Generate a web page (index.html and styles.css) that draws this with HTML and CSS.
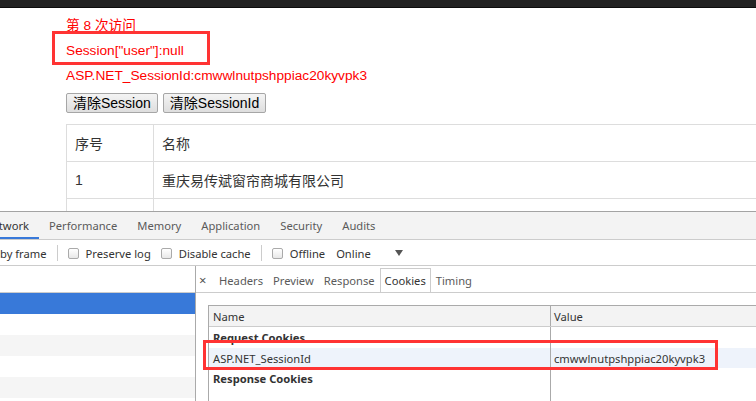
FILE: index.html
```html
<!DOCTYPE html>
<html>
<head>
<meta charset="utf-8">
<link rel="stylesheet" href="styles.css">
</head>
<body>
<div class="screen">
  <div class="topbar"></div>
  <div class="page">
    <div class="line">第 8 次访问</div>
    <div class="line">Session["user"]:null</div>
    <div class="line">ASP.NET_SessionId:cmwwlnutpshppiac20kyvpk3</div>
    <div class="buttons">
      <button class="btn">清除Session</button>
      <button class="btn">清除SessionId</button>
    </div>
    <table class="grid">
      <tr><td class="c1">序号</td><td>名称</td></tr>
      <tr><td class="c1">1</td><td>重庆易传斌窗帘商城有限公司</td></tr>
      <tr><td class="c1">2</td><td>重庆易传斌窗帘商城有限公司重庆易传斌窗帘商城有限公司</td></tr>
    </table>
    <div class="mark mark-session"></div>
  </div>
  <div class="devtools">
    <div class="tabbar">
      <span class="tab tab-active">Network</span>
      <span class="tab">Performance</span>
      <span class="tab">Memory</span>
      <span class="tab">Application</span>
      <span class="tab">Security</span>
      <span class="tab">Audits</span>
    </div>
    <div class="toolbar">
      <span class="tb-text">by frame</span>
      <span class="sep"></span>
      <span class="cb"></span><span class="tb-text">Preserve log</span>
      <span class="cb"></span><span class="tb-text">Disable cache</span>
      <span class="sep"></span>
      <span class="cb"></span><span class="tb-text">Offline</span>
      <span class="tb-text online">Online</span>
      <span class="tri"></span>
    </div>
    <div class="split">
      <div class="left">
        <div class="lhead"></div>
        <div class="lrow sel"></div>
        <div class="lrow"></div>
        <div class="lrow alt"></div>
        <div class="lrow"></div>
        <div class="lrow alt"></div>
      </div>
      <div class="right">
        <div class="rtabs">
          <span class="close">×</span>
          <span class="rtab">Headers</span>
          <span class="rtab">Preview</span>
          <span class="rtab">Response</span>
          <span class="rtab rtab-active">Cookies</span>
          <span class="rtab">Timing</span>
        </div>
        <div class="rbody">
          <div class="ctable">
            <div class="crow chead"><div class="cn">Name</div><div class="cv">Value</div></div>
            <div class="crow"><div class="cn bold">Request Cookies</div><div class="cv"></div></div>
            <div class="crow hl"><div class="cn">ASP.NET_SessionId</div><div class="cv">cmwwlnutpshppiac20kyvpk3</div></div>
            <div class="crow"><div class="cn bold">Response Cookies</div><div class="cv"></div></div>
            <div class="crow"><div class="cn"></div><div class="cv"></div></div>
          </div>
        </div>
      </div>
    </div>
    <div class="mark mark-cookie"></div>
  </div>
</div>
</body>
</html>
```
FILE: styles.css
```css
* { box-sizing: border-box; }
html, body { margin: 0; padding: 0; }
body { background: #fff; overflow: hidden; }
.screen {
  width: 756px;
  height: 401px;
  display: flex;
  flex-direction: column;
  overflow: hidden;
  position: relative;
}
.topbar {
  height: 8px;
  background: #222;
  border-bottom: 1px solid #0c0c0c;
  flex: none;
}
.page {
  height: 203px;
  flex: none;
  overflow: hidden;
  padding: 5px 0 0 66px;
  font-family: "Liberation Sans", "Noto Sans CJK SC", sans-serif;
  font-size: 14px;
  position: relative;
}
.line {
  color: #f00;
  line-height: 25px;
  height: 25px;
  white-space: nowrap;
  font-size: 13.7px;
}
.buttons {
  display: flex;
  gap: 5px;
  margin-top: 5px;
}
.btn {
  font-family: "Liberation Sans", "Noto Sans CJK SC", sans-serif;
  font-size: 14px;
  height: 20px;
  padding: 0 6px;
  color: #000;
  background: linear-gradient(#f4f4f4, #dedede);
  border: 1px solid #a6a6a6;
  border-radius: 2px;
  line-height: 18px;
}
.grid {
  margin-top: 11px;
  border-collapse: collapse;
  width: 760px;
  color: #333;
}
.grid td {
  border: 1px solid #ddd;
  height: 37px;
  padding: 0 8px;
  white-space: nowrap;
}
.grid td.c1 { width: 87px; }
.mark {
  position: absolute;
  border: 3px solid #f33;
}
.mark-session {
  left: 52px;
  top: 23px;
  width: 158px;
  height: 34px;
}
.devtools {
  flex: 1;
  border-top: 1px solid #a3a3a3;
  font-family: "Noto Sans", "Open Sans", sans-serif;
  font-size: 11.2px;
  color: #333;
  display: flex;
  flex-direction: column;
  position: relative;
  min-height: 0;
}
.tabbar {
  height: 28px;
  background: #f3f3f3;
  border-bottom: 1px solid #ccc;
  display: flex;
  align-items: stretch;
  white-space: nowrap;
  overflow: hidden;
}
.tab {
  padding: 0 10px;
  line-height: 27px;
  color: #5a5a5a;
}
.tab-active {
  margin-left: -16px;
  padding-left: 0;
  border-bottom: 2px solid #3879d9;
  color: #333;
}
.toolbar {
  height: 26px;
  border-bottom: 1px solid #ccc;
  display: flex;
  align-items: center;
  white-space: nowrap;
  color: #333;
  padding-top: 1px;
}
.tb-text { margin-right: 10px; }
.online { margin-left: 1px; }
.sep {
  width: 1px;
  height: 16px;
  background: #ccc;
  margin: 0 10px 0 0;
}
.cb {
  width: 11px;
  height: 11px;
  border: 1px solid #aaa;
  border-radius: 2px;
  background: linear-gradient(#fff, #e8e8e8);
  margin-right: 7px;
}
.tri {
  width: 0;
  height: 0;
  border-left: 4px solid transparent;
  border-right: 4px solid transparent;
  border-top: 6px solid #555;
  margin-left: 14px;
}
.split {
  flex: 1;
  display: flex;
  min-height: 0;
}
.left {
  width: 196px;
  border-right: 1px solid #aaa;
  flex: none;
}
.lhead {
  height: 27px;
  border-bottom: 1px solid #ccc;
}
.lrow { height: 21px; }
.lrow.sel { background: #3879d9; }
.lrow.alt { background: #f5f5f5; }
.right {
  flex: 1;
  display: flex;
  flex-direction: column;
}
.rtabs {
  height: 27px;
  border-bottom: 1px solid #ccc;
  display: flex;
  align-items: flex-end;
  white-space: nowrap;
}
.close {
  width: 14px;
  margin-left: 3px;
  line-height: 24px;
  font-size: 13px;
  color: #555;
}
.rtab {
  padding: 0 4px;
  line-height: 23px;
  color: #5a5a5a;
  border: 1px solid transparent;
  border-bottom: none;
}
.rtab:nth-child(2) { margin-left: 1px; }
.rtab-active {
  border-color: #ccc;
  background: #fff;
  color: #333;
}
.rbody {
  flex: 1;
  padding: 12px 0 0 12px;
  overflow: hidden;
}
.ctable {
  border-top: 1px solid #aaa;
  border-left: 1px solid #aaa;
  width: 560px;
}
.crow {
  display: flex;
  height: 21px;
  line-height: 21px;
}
.crow.chead {
  background: #f3f3f3;
  border-bottom: 1px solid #ccc;
  height: 21px;
}
.crow.hl { background: #eef3fb; height: 20px; line-height: 22px; }
.cn {
  width: 342px;
  padding-left: 4px;
  border-right: 1px solid #aaa;
  flex: none;
}
.cv {
  flex: 1;
  padding-left: 3px;
}
.bold { font-weight: bold; }
.mark-cookie {
  left: 203px;
  top: 128px;
  width: 515px;
  height: 30px;
}
```
